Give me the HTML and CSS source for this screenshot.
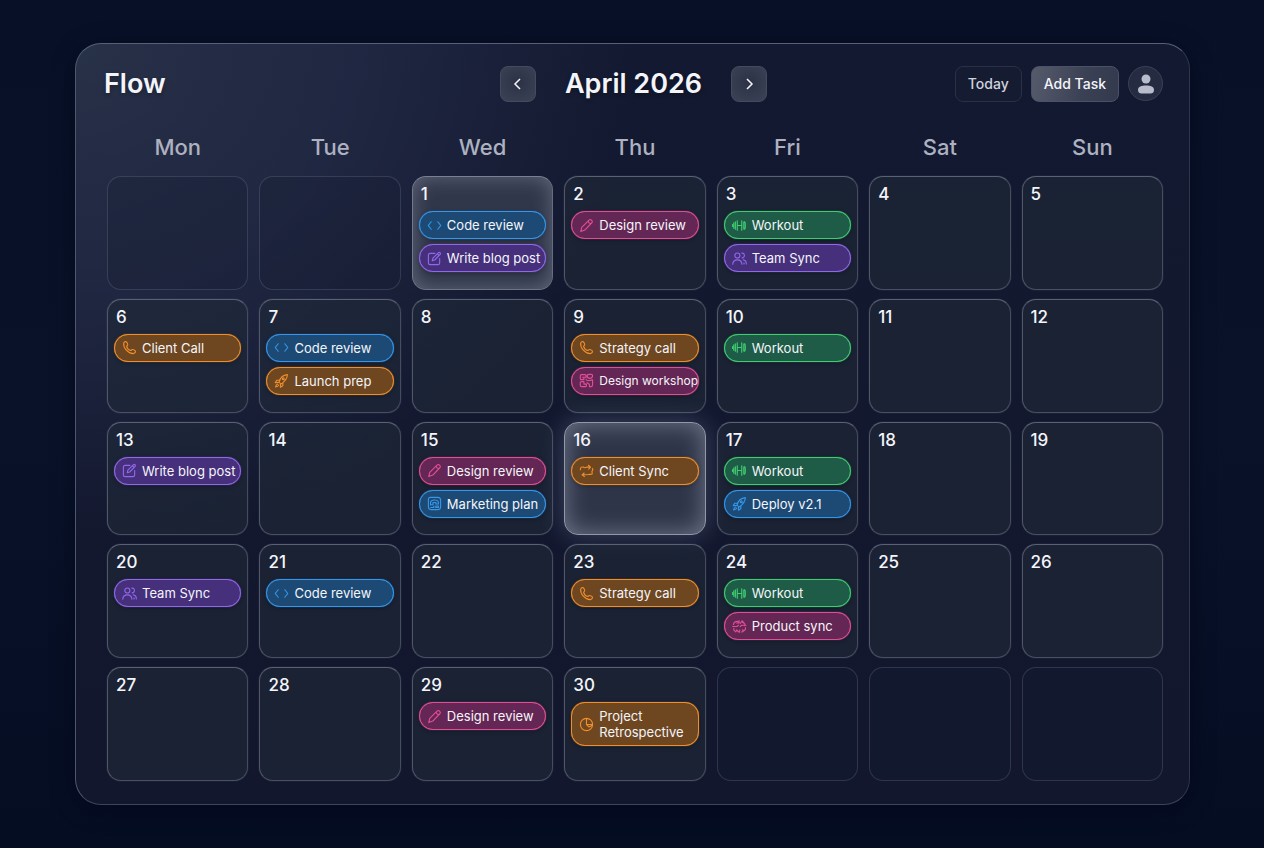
FILE: index.html
```html
<!DOCTYPE html>
<html lang="en">
<head>
  <meta charset="UTF-8">
  <meta name="viewport" content="width=device-width, initial-scale=1.0">
  <title>Flow - April 2026</title>
  <link rel="stylesheet" href="styles.css">
</head>
<body>
  <!-- Icon sprite -->
  <svg class="sprite" aria-hidden="true">
    <symbol id="i-code" viewBox="0 0 16 16"><path d="M4.5 4 1.3 8l3.2 4M11.5 4l3.2 4-3.2 4"/></symbol>
    <symbol id="i-edit" viewBox="0 0 16 16"><path d="M8.5 2.5H3.3C2.2 2.500 1.500 3.200 1.500 4.300v8.400c0 1.100.7 1.800 1.800 1.800h8.400c1.100 0 1.800-.7 1.800-1.800V8M12.300 1.700c.9-.8 2.600.7 1.800 1.800L8.200 9.600l-2.600.8.700-2.700zM11.200 3l1.800 1.800"/></symbol>
    <symbol id="i-pencil" viewBox="0 0 16 16"><path d="M11 2.100c1.200-1.300 4.200 1 2.900 2.700L6.200 12.900 1.900 14.500l1-4.500zM9.800 3.500c.3 1.800 1.200 2.400 2.700 2.700"/></symbol>
    <symbol id="i-gym" viewBox="0 0 16 16"><path d="M5.600 3v10M10.400 3v10M5.600 8h4.800M3.600 4v8M12.600 4.200c1.300-.6 1.600.6 1.600 3.800s-.3 4.400-1.600 3.800zM1.900 5v6M.6 7v2"/></symbol>
    <symbol id="i-team" viewBox="0 0 16 16"><circle cx="5.700" cy="4.800" r="2.700"/><path d="M.8 14c.2-3.200 1.900-4.600 4.900-4.600s4.700 1.400 4.900 4.600M10.500 2.300c3.600-.6 3.600 5.400.2 5M12 9.500c2.100.2 3.200 1.600 3.300 4.300M12.800 13.900v-1.200"/></symbol>
    <symbol id="i-phone" viewBox="0 0 16 16"><path d="M1.800 3.300C2.300 2 3.500 1.300 4.500 1.900c.8.7 1.500 2 1.600 2.900 0 1-.9 1.300-1.200 1.900.5 2 2.200 3.800 4.400 4.500.8-.3 1.200-1.300 2.200-1.100 1.100.2 2.300.8 2.800 1.700.4 1.300-.9 2.500-2.400 2.700C6.500 14.500 1.200 8.500 1.800 3.300z"/></symbol>
    <symbol id="i-rocket" viewBox="0 0 16 16"><path d="M5.300 9.700C6.300 5.800 9 2.200 14.300 1.700c-.1 4.700-3 7.700-6.800 10.100zM5.800 7.500l-2.900.3-1.500 2.500 3.100-.2M9.500 10.500l-.1 3-2.600 1.700.1-3.200M4 11.800c-1.300.3-2 1.300-2.300 3 1.700 0 2.800-.6 3.300-1.900"/><circle cx="9.900" cy="6.100" r="1"/></symbol>
    <symbol id="i-shapes" viewBox="0 0 16 16"><path d="M2.500 1.700h4.200c.6 0 .8.500.8 1v1.800H5.200v2.600H2.400c-.8 0-1-.5-1-1V2.800c0-.7.4-1.100 1.100-1.100zM3.500 4.500h1.700M8.700 2.800c0-1.300 1.100-1.300 1.800-1.300h2.600c1.100 0 1.400.7 1.400 1.500 0 1.700-.8 2.500-2.700 2.700-1.900 0-3.100-.9-3.100-2.900zM7.500 6.500c0 1.300.6 1.700 2 1.800M2 9.200h3.300v2.700h2.600v1.700c0 .6-.3.900-.8.900H3c-1.300 0-1.600-.6-1.600-1.600V9.800M9.800 8.300l4.700-1v5.300c0 1.400-.4 1.900-1.500 1.900h-1.800l-.2-2.500-2.500-1.500"/></symbol>
    <symbol id="i-plan" viewBox="0 0 16 16"><path d="M3.700 1.500h8c1.900.1 2.800 1.100 2.800 3v7.300c0 2-.8 2.700-2.700 2.700H4.200c-1.900 0-2.700-.9-2.700-2.700V3.600c0-1.300.8-2.100 2.200-2.100zM3.800 9.500V6.600c.8-2.700 6.800-3.200 8.300-.5v2.400H9.500V6.900H6.400v2.400H3.800M4 12.300h3.300v-1.500M9.300 12.300v-1.600h2.900v1.600z"/></symbol>
    <symbol id="i-sync" viewBox="0 0 16 16"><path d="M1.500 7.200C1.400 4.800 2.500 4 4.500 4.300c1.300 1 2.700.8 3.600.1h3.600M10 2.400l2.300 2L10.400 6.500M14.300 5.800c.7 1.200.5 2.200-.5 3l.3 2.800c-1 1-2.500.4-4.200.6l-5.800.5M5.500 10.700l-2.200 2 2.400 1.800"/></symbol>
    <symbol id="i-cycle" viewBox="0 0 16 16"><path d="M1.500 6C2 3.500 3.600 2.300 6 2.500l1.400 1.400M7.500 1.700v2.600H5M8.800 4.600l2-2.600 2 2.200M10.800 2.400c.3 2 1.400 2.500 2.900 2.700v2M.8 8h4.500L7 6.500M8.700 8l1.800-1.300h4.300M2 9.800v2l2.100 1.900 1-2.200M5.700 12.500l2 1.800.6-2.600M9.800 13.800l1.700-.2v-2.300M12 13l2.300-1.800V9"/></symbol>
    <symbol id="i-pie" viewBox="0 0 16 16"><circle cx="8" cy="8" r="6.500"/><path d="M8 1.500V8h6.500M8 8l2.500 2.500c1.900-.3 3.200-1 3.900-2.500"/></symbol>
  </svg>

  <main class="panel">
    <header class="topbar">
      <h1 class="logo">Flow</h1>
      <div class="month-nav">
        <button class="btn nav-btn" type="button" aria-label="Previous month">
          <svg class="chevron" viewBox="0 0 16 16"><path d="M10 3 5 8l5 5"/></svg>
        </button>
        <h2 class="month">April 2026</h2>
        <button class="btn nav-btn" type="button" aria-label="Next month">
          <svg class="chevron" viewBox="0 0 16 16"><path d="m6 3 5 5-5 5"/></svg>
        </button>
      </div>
      <div class="actions">
        <button class="btn today-btn" type="button">Today</button>
        <button class="btn add-btn" type="button">Add Task</button>
        <button class="btn avatar" type="button" aria-label="Account">
          <svg viewBox="0 0 20 20"><circle cx="10" cy="5" r="4.500"/><path d="M2 16c0-3.500 3.500-4.500 8-4.500s8 1 8 4.500c0 2.500-1.500 3.500-3.500 3.500h-9C3.500 19.500 2 18.500 2 16z"/></svg>
        </button>
      </div>
    </header>

    <div class="weekdays">
      <span>Mon</span><span>Tue</span><span>Wed</span><span>Thu</span><span>Fri</span><span>Sat</span><span>Sun</span>
    </div>

    <div class="calendar">
      <!-- Week 1 -->
      <div class="day empty"></div>
      <div class="day empty"></div>
      <div class="day selected">
        <span class="date">1</span>
        <div class="task blue"><svg class="icon"><use href="#i-code"/></svg><span>Code review</span></div>
        <div class="task purple"><svg class="icon"><use href="#i-edit"/></svg><span>Write blog post</span></div>
      </div>
      <div class="day">
        <span class="date">2</span>
        <div class="task pink"><svg class="icon"><use href="#i-pencil"/></svg><span>Design review</span></div>
      </div>
      <div class="day">
        <span class="date">3</span>
        <div class="task green"><svg class="icon"><use href="#i-gym"/></svg><span>Workout</span></div>
        <div class="task purple"><svg class="icon"><use href="#i-team"/></svg><span>Team Sync</span></div>
      </div>
      <div class="day"><span class="date">4</span></div>
      <div class="day"><span class="date">5</span></div>

      <!-- Week 2 -->
      <div class="day">
        <span class="date">6</span>
        <div class="task orange"><svg class="icon"><use href="#i-phone"/></svg><span>Client Call</span></div>
      </div>
      <div class="day">
        <span class="date">7</span>
        <div class="task blue"><svg class="icon"><use href="#i-code"/></svg><span>Code review</span></div>
        <div class="task orange"><svg class="icon"><use href="#i-rocket"/></svg><span>Launch prep</span></div>
      </div>
      <div class="day"><span class="date">8</span></div>
      <div class="day">
        <span class="date">9</span>
        <div class="task orange"><svg class="icon"><use href="#i-phone"/></svg><span>Strategy call</span></div>
        <div class="task pink compact"><svg class="icon"><use href="#i-shapes"/></svg><span>Design workshop</span></div>
      </div>
      <div class="day">
        <span class="date">10</span>
        <div class="task green"><svg class="icon"><use href="#i-gym"/></svg><span>Workout</span></div>
      </div>
      <div class="day"><span class="date">11</span></div>
      <div class="day"><span class="date">12</span></div>

      <!-- Week 3 -->
      <div class="day">
        <span class="date">13</span>
        <div class="task purple"><svg class="icon"><use href="#i-edit"/></svg><span>Write blog post</span></div>
      </div>
      <div class="day"><span class="date">14</span></div>
      <div class="day">
        <span class="date">15</span>
        <div class="task pink"><svg class="icon"><use href="#i-pencil"/></svg><span>Design review</span></div>
        <div class="task blue"><svg class="icon"><use href="#i-plan"/></svg><span>Marketing plan</span></div>
      </div>
      <div class="day selected today">
        <span class="date">16</span>
        <div class="task orange"><svg class="icon"><use href="#i-sync"/></svg><span>Client Sync</span></div>
      </div>
      <div class="day">
        <span class="date">17</span>
        <div class="task green"><svg class="icon"><use href="#i-gym"/></svg><span>Workout</span></div>
        <div class="task blue"><svg class="icon"><use href="#i-rocket"/></svg><span>Deploy v2.1</span></div>
      </div>
      <div class="day"><span class="date">18</span></div>
      <div class="day"><span class="date">19</span></div>

      <!-- Week 4 -->
      <div class="day">
        <span class="date">20</span>
        <div class="task purple"><svg class="icon"><use href="#i-team"/></svg><span>Team Sync</span></div>
      </div>
      <div class="day">
        <span class="date">21</span>
        <div class="task blue"><svg class="icon"><use href="#i-code"/></svg><span>Code review</span></div>
      </div>
      <div class="day"><span class="date">22</span></div>
      <div class="day">
        <span class="date">23</span>
        <div class="task orange"><svg class="icon"><use href="#i-phone"/></svg><span>Strategy call</span></div>
      </div>
      <div class="day">
        <span class="date">24</span>
        <div class="task green"><svg class="icon"><use href="#i-gym"/></svg><span>Workout</span></div>
        <div class="task pink"><svg class="icon"><use href="#i-cycle"/></svg><span>Product sync</span></div>
      </div>
      <div class="day"><span class="date">25</span></div>
      <div class="day"><span class="date">26</span></div>

      <!-- Week 5 -->
      <div class="day"><span class="date">27</span></div>
      <div class="day"><span class="date">28</span></div>
      <div class="day">
        <span class="date">29</span>
        <div class="task pink"><svg class="icon"><use href="#i-pencil"/></svg><span>Design review</span></div>
      </div>
      <div class="day">
        <span class="date">30</span>
        <div class="task orange tall"><svg class="icon"><use href="#i-pie"/></svg><span>Project Retrospective</span></div>
      </div>
      <div class="day empty"></div>
      <div class="day empty"></div>
      <div class="day empty"></div>
    </div>
  </main>
</body>
</html>
```
FILE: styles.css
```css
* {
  box-sizing: border-box;
}
body {
  margin: 0;
  min-height: 100vh;
  padding: 43px 74px 43px 75px;
  display: flex;
  font-family: Inter, "Liberation Sans", sans-serif;
  color: #f4f5fa;
  background: linear-gradient(180deg, #071027 0%, #091229 50%, #050d23 100%);
}
.sprite {
  position: absolute;
  width: 0;
  height: 0;
}

.panel {
  flex: 1;
  min-width: 0;
  display: flex;
  flex-direction: column;
  padding: 22px 26px 23px 28px;
  border: 1px solid;
  border-color: #566079 #2d364b #3b455b #4d586f;
  border-radius: 26px;
  background:
    radial-gradient(ellipse 560px 500px at 0 0, rgba(56, 69, 91, 0.55), rgba(52, 60, 92, 0.4) 50%, transparent 100%),
    linear-gradient(180deg, #131930, #12172d);
  box-shadow: 0 4px 24px rgba(0, 2, 20, 0.4);
}

/* Top bar */
.topbar {
  display: grid;
  grid-template-columns: 1fr auto 1fr;
  align-items: center;
}
.logo,
.month {
  margin: 0;
  font-size: 27px;
  line-height: 36px;
  font-weight: 600;
  text-shadow: 0 2px 4px rgba(0, 0, 0, 0.3);
}
.month-nav {
  display: flex;
  align-items: center;
  gap: 29px;
}
.actions {
  display: flex;
  justify-content: flex-end;
  gap: 9px;
}
.btn {
  height: 36px;
  padding: 0 12px;
  border: 1px solid #454b5f;
  border-radius: 8px;
  font: 500 14px/20px Inter, "Liberation Sans", sans-serif;
  color: #f4f5fa;
  background: none;
  cursor: pointer;
}
.nav-btn {
  display: flex;
  align-items: center;
  justify-content: center;
  width: 36px;
  padding: 0;
  background: radial-gradient(circle at 50% 45%, #2c3246, #3d4357);
}
.chevron {
  width: 16px;
  height: 16px;
  fill: none;
  stroke: currentColor;
  stroke-width: 1.5;
}
.today-btn {
  color: #cfd2df;
  border-color: #2a3045;
  background: #151b30;
}
.add-btn {
  border-color: #4c5266;
  background: linear-gradient(100deg, #565b6c, #3b4154 60%, #343a4d);
}
.avatar {
  display: flex;
  align-items: center;
  justify-content: center;
  width: 35px;
  height: 35px;
  padding: 0;
  border-color: #3b4155;
  border-radius: 50%;
  background: #252b40;
}
.avatar svg {
  width: 20px;
  height: 20px;
  fill: #b9bccb;
}

/* Calendar */
.weekdays,
.calendar {
  display: grid;
  grid-template-columns: repeat(7, minmax(0, 1fr));
  column-gap: 11px;
  margin-left: 3px;
}
.weekdays {
  margin-top: 31px;
  margin-bottom: 15px;
  text-align: center;
  font-size: 22px;
  line-height: 28px;
  font-weight: 500;
  color: #adb1c0;
}
.calendar {
  flex: 1;
  grid-auto-rows: minmax(113px, 1fr);
  row-gap: 9px;
}
.day {
  display: flex;
  flex-direction: column;
  gap: 5px;
  padding: 6px;
  border: 1px solid;
  border-color: #5a6174 #454c5e #4a5063 #505769;
  border-radius: 14px;
  background: rgba(32, 42, 56, 0.6);
  box-shadow: 0 0 1px rgba(170, 180, 210, 0.5);
}
.day.empty {
  border-color: rgba(150, 158, 185, 0.22);
  background: rgba(20, 27, 46, 0.25);
  box-shadow: none;
}
.day.selected {
  border-color: #7b8090 #676c7e #6e7384 #747989;
  background: #30374a;
  box-shadow: inset 0 0 20px rgba(190, 195, 215, 0.36);
}
.day.today {
  border-color: #9398a7;
  background: #2e3549;
  box-shadow: inset 0 0 24px rgba(200, 205, 225, 0.45), 0 0 24px rgba(150, 165, 205, 0.32);
}
.date {
  padding: 0 2px 1px;
  font-size: 17px;
  line-height: 22px;
  font-weight: 500;
}

/* Tasks */
.task {
  display: flex;
  align-items: center;
  gap: 5px;
  min-height: 28px;
  padding: 0 0 0 7px;
  border: 1px solid;
  border-radius: 14px;
  font-size: 13px;
  line-height: 16px;
  white-space: nowrap;
  box-shadow: 0 0 1px currentColor, 0 1px 4px rgba(0, 0, 0, 0.3);
}
.task span {
  color: #f4f5fa;
}
.task.compact {
  font-size: 12px;
}
.task.tall {
  min-height: 44px;
  white-space: normal;
}
.icon {
  flex: none;
  width: 15px;
  height: 15px;
  fill: none;
  stroke: currentColor;
  stroke-width: 1.2;
  stroke-linecap: round;
  stroke-linejoin: round;
}
.blue {
  color: #3596ea;
  background: #1d4a75;
}
.purple {
  color: #9068e8;
  background: #46307c;
}
.pink {
  color: #e04f95;
  background: #642654;
}
.green {
  color: #42cc72;
  background: #1f5c48;
}
.orange {
  color: #ee8e2d;
  background: #6e4721;
}
```
